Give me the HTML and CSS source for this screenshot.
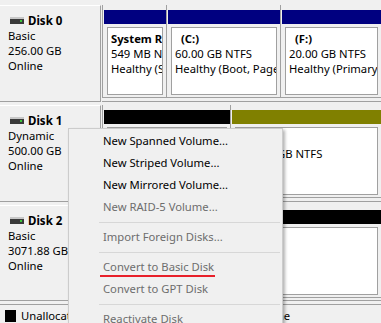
FILE: index.html
```html
<!DOCTYPE html>
<html>
<head>
<meta charset="utf-8">
<link rel="stylesheet" href="styles.css">
</head>
<body>
<div class="view">
  <div class="disks">
    <div class="row">
      <div class="label">
        <div class="title"><svg class="icon" width="14" height="7" viewBox="0 0 14 7"><rect x="0" y="0" width="14" height="7" fill="#3a3a3a"/><rect x="0" y="0" width="14" height="2" fill="#c8c8c8"/><rect x="10" y="3" width="2" height="2" fill="#3cc83c"/></svg>Disk 0</div>
        <div>Basic</div>
        <div>256.00 GB</div>
        <div>Online</div>
      </div>
      <div class="parts">
        <div class="cell w-sys"><div class="bar navy"></div><div class="box"><div class="name nopad">System Reserved</div><div>549 MB NTFS</div><div>Healthy (System, Active, Primary Partition)</div></div></div>
        <div class="cell w-c"><div class="bar navy"></div><div class="box"><div class="name">(C:)</div><div>60.00 GB NTFS</div><div>Healthy (Boot, Page File, Crash Dump, Primary Partition)</div></div></div>
        <div class="cell grow"><div class="bar navy"></div><div class="box"><div class="name">(F:)</div><div>20.00 GB NTFS</div><div>Healthy (Primary Partition)</div></div></div>
      </div>
    </div>
    <div class="row">
      <div class="label">
        <div class="title"><svg class="icon" width="14" height="7" viewBox="0 0 14 7"><rect x="0" y="0" width="14" height="7" fill="#3a3a3a"/><rect x="0" y="0" width="14" height="2" fill="#c8c8c8"/><rect x="10" y="3" width="2" height="2" fill="#3cc83c"/></svg>Disk 1</div>
        <div>Dynamic</div>
        <div>500.00 GB</div>
        <div>Online</div>
      </div>
      <div class="parts">
        <div class="cell w-un"><div class="bar black"></div><div class="box"><div class="name nopad">&nbsp;</div><div>250.00 GB</div><div>Unallocated</div></div></div>
        <div class="cell grow"><div class="bar olive"></div><div class="box"><div class="name">(E:)</div><div>250.00 GB NTFS</div><div>Healthy</div></div></div>
      </div>
    </div>
    <div class="row last">
      <div class="label">
        <div class="title"><svg class="icon" width="14" height="7" viewBox="0 0 14 7"><rect x="0" y="0" width="14" height="7" fill="#3a3a3a"/><rect x="0" y="0" width="14" height="2" fill="#c8c8c8"/><rect x="10" y="3" width="2" height="2" fill="#3cc83c"/></svg>Disk 2</div>
        <div>Basic</div>
        <div>3071.88 GB</div>
        <div>Online</div>
      </div>
      <div class="parts">
        <div class="cell grow"><div class="bar black"></div><div class="box"><div class="name nopad">&nbsp;</div><div>3071.88 GB</div><div>Unallocated</div></div></div>
      </div>
    </div>
  </div>
  <div class="legend">
    <span class="key"><span class="swatch sw-black"></span>Unallocated</span>
    <span class="key"><span class="swatch sw-navy"></span>Primary partition</span>
    <span class="key"><span class="swatch sw-olive"></span>Simple volume</span>
  </div>

  <div class="menu">
    <div class="item">New Spanned Volume...</div>
    <div class="item">New Striped Volume...</div>
    <div class="item">New Mirrored Volume...</div>
    <div class="item off">New RAID-5 Volume...</div>
    <div class="sep"></div>
    <div class="item off">Import Foreign Disks...</div>
    <div class="sep"></div>
    <div class="item off">Convert to Basic Disk</div>
    <div class="item off">Convert to GPT Disk</div>
    <div class="sep"></div>
    <div class="item off">Reactivate Disk</div>
  </div>
  <div class="mark"></div>
</div>
</body>
</html>
```

FILE: styles.css
```css
html, body {
  margin: 0;
  padding: 0;
  background: #f0f0f0;
  overflow: hidden;
}
body {
  width: 381px;
  height: 323px;
  font-family: "Noto Sans", "Open Sans", sans-serif;
  font-size: 11.25px;
  line-height: 15px;
  color: #000;
}
.view {
  position: relative;
  width: 381px;
  height: 323px;
  overflow: hidden;
}
.disks {
  padding-top: 5px;
}
.row {
  display: flex;
  height: 97px;
  margin-bottom: 3px;
}
.row.last {
  height: 96px;
  margin-bottom: 0;
}
.label {
  width: 101px;
  flex: none;
  box-sizing: border-box;
  background: #f0f0f0;
  border-top: 1px solid #ffffff;
  border-right: 1px solid #a0a0a0;
  border-bottom: 1px solid #a0a0a0;
  padding: 7px 0 0 8px;
  white-space: nowrap;
}
.title {
  display: flex;
  align-items: center;
  font-weight: bold;
  font-size: 11.5px;
}
.icon {
  display: block;
  margin: 0 4px 0 2px;
}
.parts {
  flex: 1;
  display: flex;
  margin-left: 1px;
  border-bottom: 1px solid #a0a0a0;
  min-width: 0;
}
.cell {
  box-sizing: border-box;
  height: 93px;
  border-left: 1px solid #a0a0a0;
  border-bottom: 1px solid #a0a0a0;
  padding: 5px 0 0 1px;
  min-width: 0;
  display: flex;
  flex-direction: column;
}
.w-sys { width: 64px; flex: none; }
.w-c { width: 114px; flex: none; }
.w-un { width: 128px; flex: none; }
.grow { flex: 1; }
.bar {
  height: 14px;
  flex: none;
}
.navy { background: #000080; }
.black { background: #000000; }
.olive { background: #808000; }
.box {
  margin: 3px 3px 0 3px;
  height: 68px;
  box-sizing: border-box;
  background: #ffffff;
  border: 1px solid #a0a0a0;
  padding: 3px 0 0 3px;
  overflow: hidden;
  white-space: nowrap;
}
.name {
  font-weight: bold;
  padding-left: 6px;
}
.name.nopad {
  padding-left: 0;
}
.legend {
  margin-top: 3px;
  border-top: 1px solid #a0a0a0;
  height: 21px;
  display: flex;
  align-items: center;
  padding-left: 5px;
  white-space: nowrap;
}
.key {
  display: flex;
  align-items: center;
  margin-right: 3px;
}
.swatch {
  display: block;
  width: 11px;
  height: 12px;
  margin-right: 5px;
}
.sw-black { background: #000; }
.sw-navy { background: #000080; }
.sw-olive { background: #808000; }

.menu {
  position: absolute;
  left: 68px;
  top: 128px;
  width: 215px;
  height: 220px;
  box-sizing: border-box;
  background: #f0f0f0;
  border: 1px solid #cccccc;
  padding-top: 1px;
  box-shadow: 2px 2px 3px rgba(0, 0, 0, 0.3);
  white-space: nowrap;
}
.item {
  height: 22px;
  line-height: 22px;
  padding-left: 34px;
  color: #000;
}
.item.off {
  color: #6d6d6d;
}
.sep {
  height: 1px;
  margin: 4px 2px 3px 30px;
  background: #d7d7d7;
}
.mark {
  position: absolute;
  left: 100px;
  top: 275px;
  width: 115px;
  height: 2px;
  background: #e8202a;
}
```
